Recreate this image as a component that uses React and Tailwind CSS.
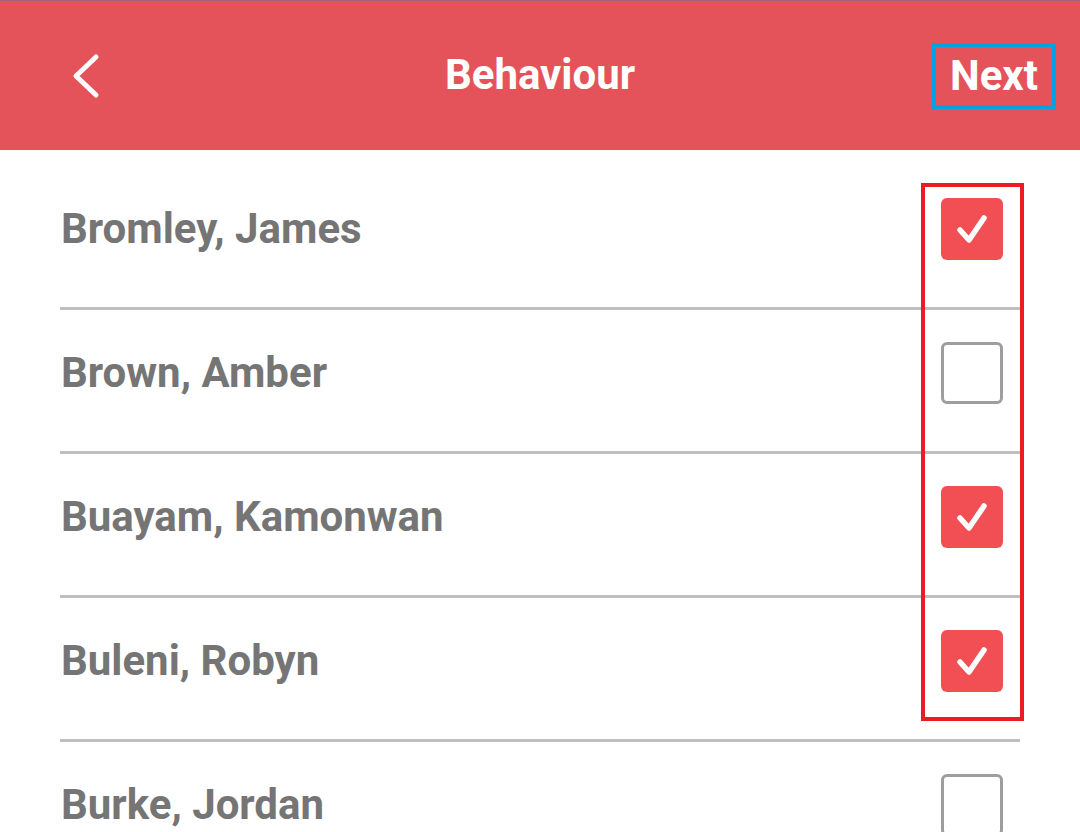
import React from "react";

const students = [
  { name: "Bromley, James", checked: true },
  { name: "Brown, Amber", checked: false },
  { name: "Buayam, Kamonwan", checked: true },
  { name: "Buleni, Robyn", checked: true },
  { name: "Burke, Jordan", checked: false },
];

const Checkbox = ({ checked }) =>
  checked ? (
    <div className="w-[62px] h-[62px] rounded-[6px] bg-[#f24f55] flex items-center justify-center">
      <svg width="62" height="62" viewBox="0 0 62 62" fill="none">
        <path d="M19 32 L28 42 L43 20" stroke="white" strokeWidth="5.5" strokeLinecap="round" strokeLinejoin="round" />
      </svg>
    </div>
  ) : (
    <div className="w-[62px] h-[62px] rounded-[6px] border-[3px] border-[#9e9e9e] bg-white" />
  );

const App = () => {
  return (
    <div className="relative w-full h-[832px] overflow-hidden bg-white" style={{ fontFamily: "Roboto, 'Liberation Sans', sans-serif" }}>
      {/* Header */}
      <div className="h-[150px] bg-[#e5535a] border-t border-[#a8607c] grid grid-cols-[1fr_auto_1fr] items-center">
        <div className="pl-[72px] pt-[1px]">
          <svg width="30" height="46" viewBox="0 0 30 46" fill="none">
            <path d="M24 4 L4 23 L24 42" stroke="white" strokeWidth="5" strokeLinecap="round" strokeLinejoin="round" />
          </svg>
        </div>
        <div className="text-white font-bold text-[42px] leading-none -mt-[2px]">Behaviour</div>
        <div className="flex justify-end pr-[24px]">
          <button className="w-[124px] h-[66px] border-4 border-[#00a3e0] text-white font-bold text-[42px] leading-none flex items-center justify-center">
            Next
          </button>
        </div>
      </div>

      {/* Student list */}
      <div className="pt-[16px]">
        {students.map((s) => (
          <div key={s.name} className="mx-[60px] pb-[15px] border-b-[3px] border-[#bfbfbf]">
            <div className="h-[126px] flex items-center justify-between pr-[17px]">
              <span className="pl-[1px] text-[42px] font-bold text-[#757575] leading-none">{s.name}</span>
              <Checkbox checked={s.checked} />
            </div>
          </div>
        ))}
      </div>

      {/* Selection outline */}
      <div className="absolute left-[921px] top-[183px] w-[103px] h-[538px] border-4 border-[#ed1c24] pointer-events-none" />
    </div>
  );
};

export default App;
